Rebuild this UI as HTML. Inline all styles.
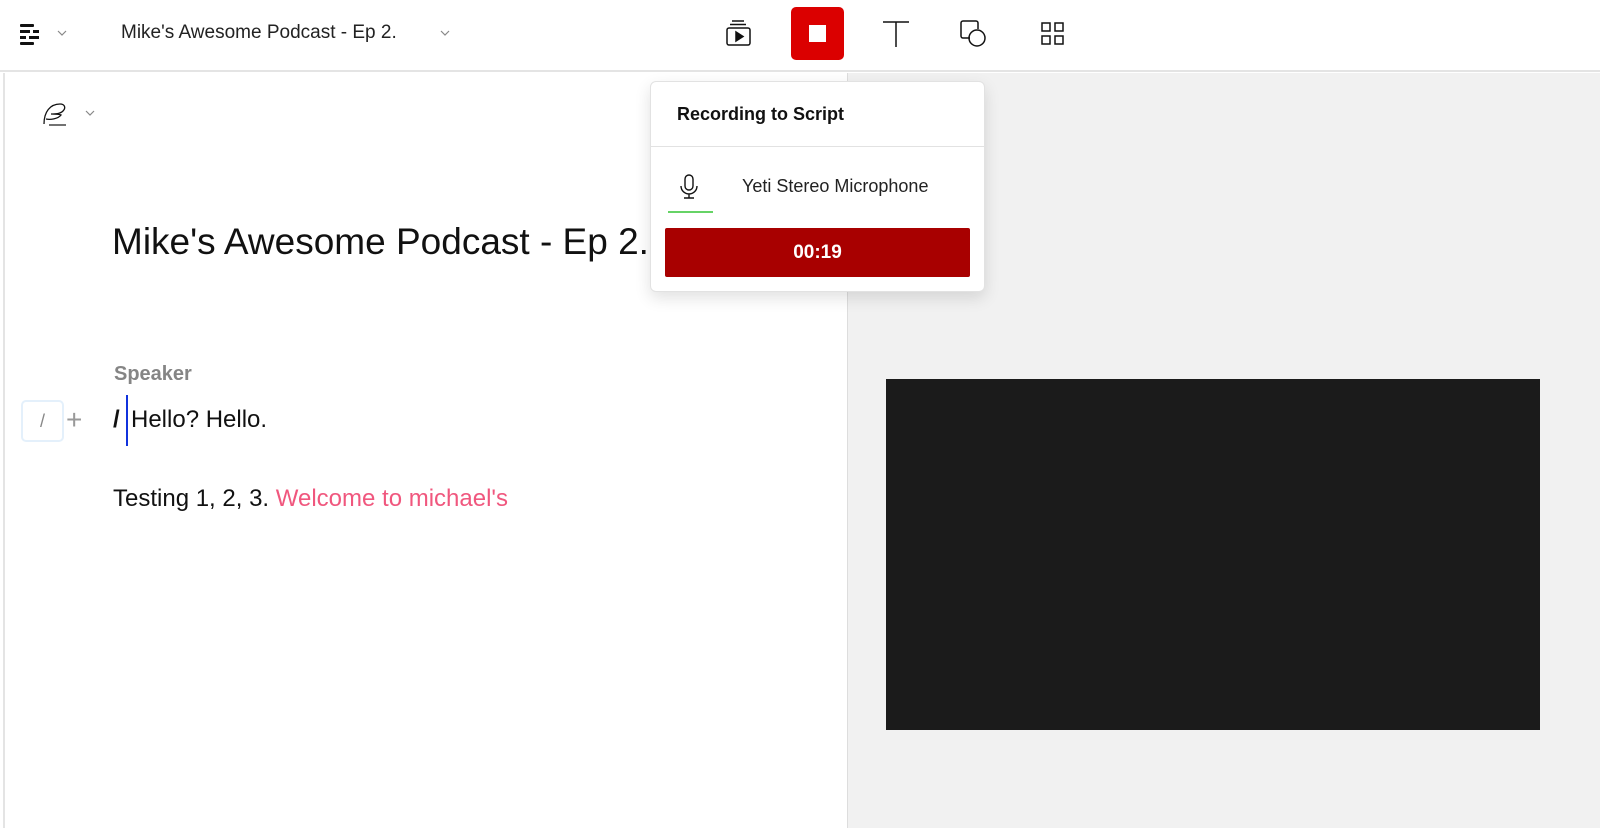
<!DOCTYPE html>
<html><head><style>
*{margin:0;padding:0;box-sizing:border-box}
body{width:1600px;height:828px;overflow:hidden;background:#fff;font-family:"Liberation Sans",sans-serif;position:relative;color:#111}
.abs{position:absolute}
</style></head><body>
<div class="abs" style="left:0;top:0;width:1600px;height:72px;background:#fff;border-bottom:2px solid #e4e4e4"></div>
<svg class="abs" style="left:19px;top:22px" width="24" height="24" viewBox="0 0 24 24"><g fill="#111"><rect x="1" y="2" width="14" height="3" rx="1"/><rect x="1" y="8" width="10" height="3"/><rect x="14" y="8" width="6" height="3"/><rect x="1" y="14" width="6" height="3"/><rect x="10" y="14" width="10" height="3"/><rect x="1" y="20" width="14" height="3" rx="1"/></g></svg>
<svg class="abs" style="left:56px;top:29px" width="12" height="8" viewBox="0 0 12 8"><path d="M2 2l4 4 4-4" fill="none" stroke="#888" stroke-width="1.2"/></svg>
<div class="abs" style="left:121px;top:22px;font-size:19px;color:#222">Mike's Awesome Podcast - Ep 2.</div>
<svg class="abs" style="left:439px;top:29px" width="12" height="8" viewBox="0 0 12 8"><path d="M2 2l4 4 4-4" fill="none" stroke="#888" stroke-width="1.2"/></svg>
<svg class="abs" style="left:724px;top:18px" width="30" height="30" viewBox="0 0 30 30" fill="none" stroke="#111" stroke-width="1.5"><path d="M8 3h12M6 6.5h16"/><rect x="3" y="10" width="23" height="17" rx="2"/><path d="M12 14v9l7-4.5z" fill="#111"/></svg>
<div class="abs" style="left:791px;top:7px;width:53px;height:53px;background:#db0000;border-radius:5px"></div>
<div class="abs" style="left:809px;top:25px;width:17px;height:17px;background:#fff"></div>
<svg class="abs" style="left:880px;top:18px" width="32" height="32" viewBox="0 0 32 32" fill="none" stroke="#111" stroke-width="1.5"><path d="M3 4h26M16 4v25"/></svg>
<svg class="abs" style="left:958px;top:18px" width="32" height="32" viewBox="0 0 32 32" fill="none" stroke="#111" stroke-width="1.5"><path d="M12 20H5a2 2 0 0 1-2-2V5a2 2 0 0 1 2-2h13a2 2 0 0 1 2 2v6"/><circle cx="19" cy="20" r="8"/></svg>
<svg class="abs" style="left:1040px;top:21px" width="26" height="26" viewBox="0 0 26 26" fill="none" stroke="#111" stroke-width="1.5"><rect x="2" y="2" width="8" height="8"/><rect x="15" y="2" width="8" height="8"/><rect x="2" y="15" width="8" height="8"/><rect x="15" y="15" width="8" height="8"/></svg>
<div class="abs" style="left:3px;top:73px;width:2px;height:755px;background:#e4e4e4"></div>
<div class="abs" style="left:847px;top:73px;width:753px;height:755px;background:#f1f1f1;border-left:1px solid #ddd"></div>
<div class="abs" style="left:886px;top:379px;width:654px;height:351px;background:#1b1b1b"></div>
<svg class="abs" style="left:40px;top:100px" width="30" height="28" viewBox="0 0 30 28" fill="none" stroke="#111" stroke-width="1.3"><path d="M4 24C4 12 10 4 20 4c5 0 6 4 3 7-3 3-8 3-12 3 3 0 8 0 10 1C18 19 10 20 6 19"/><path d="M9 25h17" stroke="#444" stroke-width="1.5"/></svg>
<svg class="abs" style="left:84px;top:109px" width="12" height="8" viewBox="0 0 12 8"><path d="M2 2l4 4 4-4" fill="none" stroke="#888" stroke-width="1.2"/></svg>
<div class="abs" style="left:112px;top:221px;font-size:37px;color:#111;white-space:nowrap">Mike's Awesome Podcast - Ep 2.</div>
<div class="abs" style="left:114px;top:363px;font-size:20px;color:#858585;font-weight:600">Speaker</div>
<div class="abs" style="left:21px;top:400px;width:43px;height:42px;border:2px solid #e4f0fb;border-radius:5px;color:#888;font-size:18px;text-align:center;line-height:38px">/</div>
<div class="abs" style="left:66px;top:404px;font-size:28px;color:#999;font-weight:300">+</div>
<div class="abs" style="left:113px;top:406px;font-size:24px;font-weight:bold;color:#111">/</div>
<div class="abs" style="left:126px;top:395px;width:2px;height:51px;background:#1133dd"></div>
<div class="abs" style="left:131px;top:406px;font-size:24px;color:#111">Hello? Hello.</div>
<div class="abs" style="left:113px;top:485px;font-size:24px;color:#111">Testing 1, 2, 3. <span style="color:#f0577e">Welcome to michael's</span></div>
<div class="abs" style="left:650px;top:81px;width:335px;height:211px;background:#fff;border:1px solid #e2e2e2;border-radius:6px;box-shadow:0 6px 16px rgba(0,0,0,.12)">
<div class="abs" style="left:26px;top:22px;font-size:18px;font-weight:bold;color:#111">Recording to Script</div>
<div class="abs" style="left:0;top:64px;width:333px;height:1px;background:#e2e2e2"></div>
<svg class="abs" style="left:27px;top:92px" width="22" height="26" viewBox="0 0 22 26" fill="none" stroke="#111" stroke-width="1.4"><rect x="7" y="1" width="8" height="15" rx="4"/><path d="M3 12a8 8 0 0 0 16 0M11 20v4M6 24h10"/></svg>
<div class="abs" style="left:17px;top:129px;width:45px;height:2px;background:#66d366"></div>
<div class="abs" style="left:91px;top:94px;font-size:18px;color:#222">Yeti Stereo Microphone</div>
<div class="abs" style="left:14px;top:146px;width:305px;height:49px;background:#a80000;border-radius:2px;color:#fff;font-weight:bold;font-size:19px;text-align:center;line-height:49px">00:19</div>
</div>
</body></html>
